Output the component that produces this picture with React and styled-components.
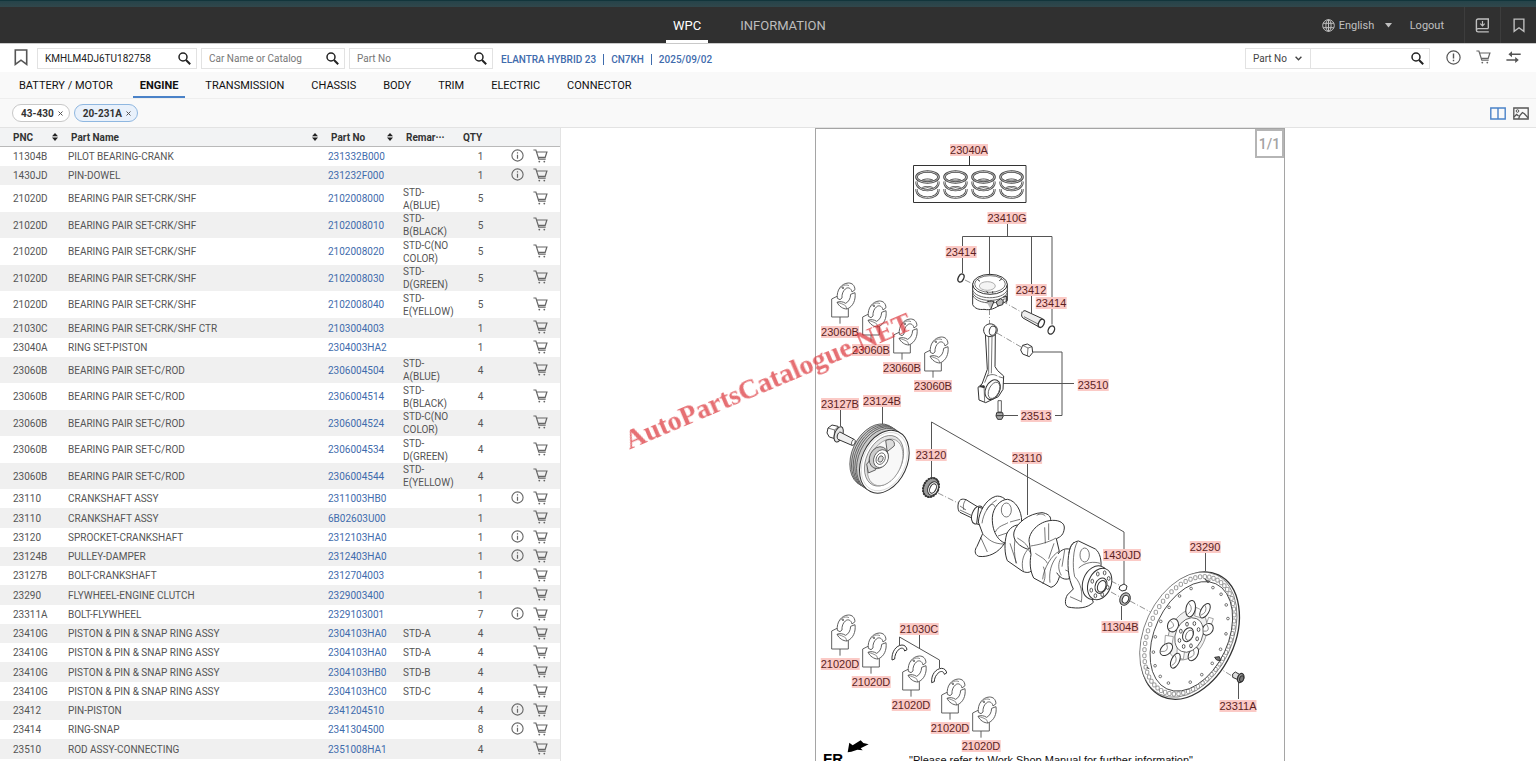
import React, { useState } from 'react'
import styled, { createGlobalStyle } from 'styled-components'

const GlobalStyle = createGlobalStyle`
  * { box-sizing: border-box; }
  body {
    margin: 0;
    background: #fff;
    color: #222;
    font-family: Roboto, "Liberation Sans", sans-serif;
    font-size: 10px;
  }
  button, input, select {
    font: inherit;
    color: inherit;
    background: none;
    border: 0;
    padding: 0;
    margin: 0;
  }
  button { cursor: pointer; }
  svg { display: block; flex: none; }
`

const Page = styled.div`
  height: 100vh;
  display: flex;
  flex-direction: column;
  overflow: hidden;
`

const TopStrip = styled.div`
  height: 7px;
  flex: none;
  border-top: 1px solid #12353b;
  background: linear-gradient(#25444a, #31474b);
`

const Header = styled.header`
  height: 37px;
  flex: none;
  display: flex;
  align-items: stretch;
  background: #303030;
  border-bottom: 1px solid #c9c9c9;
  color: #c0c0c0;
`

const MainNav = styled.nav`
  display: flex;
  gap: 25px;
  margin-left: calc(50% - 102px);
`

const NavLink = styled.a`
  display: flex;
  align-items: center;
  padding: 3px 7px 0;
  font-size: 13px;
  text-decoration: none;
  color: ${(p) => (p.$active ? '#fff' : '#bdbdbd')};
  border-bottom: 3px solid ${(p) => (p.$active ? '#fff' : 'transparent')};
`

const HeaderTools = styled.div`
  display: flex;
  align-items: stretch;
  margin-left: auto;
  font-size: 11px;
`

const Language = styled.label`
  display: flex;
  align-items: center;
  gap: 4px;
  margin-right: 18px;

  select {
    appearance: none;
    width: 42px;
  }
`

const LogoutButton = styled.button`
  margin-right: 20px;
`

const HeaderIcon = styled.button`
  width: 36px;
  display: flex;
  align-items: center;
  justify-content: center;
  border-left: 1px solid #3d3d3d;
`

const SearchBar = styled.div`
  height: 28px;
  flex: none;
  display: flex;
  align-items: center;
  padding: 0 14px;
`

const IconButton = styled.button`
  display: flex;
  align-items: center;
  justify-content: center;
  color: #555;
  padding-bottom: ${(p) => (p.$raised ? 2 : 0)}px;
`

const Fields = styled.div`
  display: flex;
  gap: 4px;
  margin-left: 9px;
`

const Field = styled.form`
  width: ${(p) => p.$width}px;
  height: 21px;
  display: flex;
  align-items: center;
  border: 1px solid #e2e2e2;
  padding: 0 5px 0 7px;

  input {
    flex: 1;
    min-width: 0;
    outline: 0;
    padding-top: 1px;
  }
  input::placeholder { color: #777; opacity: 1; }
`

const Vehicle = styled.div`
  display: flex;
  margin-left: 8px;
  padding-top: 2px;
  color: #3f6cad;
  font-weight: 500;

  span + span {
    margin-left: 7px;
    padding-left: 7px;
    border-left: 1px solid #3f6cad;
  }
`

const PartSearch = styled.form`
  width: 185px;
  height: 21px;
  display: flex;
  align-items: center;
  margin-left: auto;
  border: 1px solid #e2e2e2;
  padding-right: 5px;

  input { flex: 1; min-width: 0; outline: 0; }
`

const PartSelect = styled.label`
  height: 100%;
  width: 65px;
  display: flex;
  align-items: center;
  padding-left: 7px;
  border-right: 1px solid #e2e2e2;

  select {
    appearance: none;
    width: 42px;
    color: #444;
  }
`

const BarTools = styled.div`
  display: flex;
  gap: 15px;
  margin: 0 1px 0 16px;
`

const Tabs = styled.nav`
  height: 27px;
  flex: none;
  display: flex;
  gap: 13px;
  padding-left: 12px;
  background: #f9f9f9;
  border-bottom: 1px solid #eee;
`

const Tab = styled.a`
  display: flex;
  align-items: center;
  padding: 3px 7px 0;
  font-size: 11px;
  text-decoration: none;
  color: #111;
  font-weight: ${(p) => (p.$active ? 700 : 400)};
  border-bottom: 2px solid ${(p) => (p.$active ? '#4a82c8' : 'transparent')};
`

const Chips = styled.div`
  height: 29px;
  flex: none;
  display: flex;
  align-items: center;
  gap: 4px;
  padding: 0 7px 0 12px;
  background: #f9f9f9;
  border-bottom: 1px solid #e3e3e3;
`

const Chip = styled.button`
  height: 18px;
  display: flex;
  align-items: center;
  gap: 4px;
  padding: 0 6px 0 8px;
  font-weight: 700;
  color: #333;
  border: 1px solid ${(p) => (p.$active ? '#8fb7e0' : '#c8c8c8')};
  border-radius: 9px;
  background: ${(p) => (p.$active ? '#e9f1fb' : '#fff')};
`

const ViewSwitch = styled.div`
  display: flex;
  gap: 7px;
  margin-left: auto;
`

const Workspace = styled.main`
  flex: 1;
  min-height: 0;
  display: grid;
  grid-template-columns: minmax(561px, 36%) 1fr;
`

const ListPane = styled.section`
  min-height: 0;
  overflow-y: auto;
  scrollbar-width: none;
  border-right: 1px solid #e3e3e3;
`

const PartsTable = styled.table`
  width: 100%;
  table-layout: fixed;
  border-spacing: 0;
  line-height: 13px;
  color: #555;
`

const Th = styled.th`
  height: 19px;
  padding: 0 4px 0 ${(p) => p.$pad || 9}px;
  text-align: left;
  font-weight: 700;
  color: #333;
  background: #f2f3f4;
  border-bottom: 1px solid #b9b9b9;

  div {
    display: flex;
    align-items: center;
    justify-content: space-between;
  }
`

const Row = styled.tr`
  height: ${(p) => (p.$tall ? 27 : 19)}px;

  &:nth-child(even) {
    background: #f0f0f0;
    ${(p) => p.$tall && 'height: 26px;'}
  }
  &:nth-child(4n) {
    ${(p) => !p.$tall && 'height: 20px;'}
  }
`

const Td = styled.td`
  padding: 0 0 0 ${(p) => p.$pad || 6}px;
  text-align: ${(p) => p.$align || 'left'};
`

const PartLink = styled.a`
  color: #3f6cad;
  text-decoration: none;
`

const Actions = styled.div`
  display: flex;
  justify-content: flex-end;
  gap: 9px;
  padding: 0 12px 2px 0;
`

const DrawingPane = styled.section`
  min-height: 0;
  overflow: hidden;
  display: flex;
  justify-content: center;
  padding-left: 3px;
`

const Sheet = styled.div`
  position: relative;
  width: 470px;
  height: 664px;
  flex: none;
  border: 1px solid #a5a5a5;
`

const PageCount = styled.div`
  position: absolute;
  top: 0;
  right: 0;
  width: 29px;
  height: 29px;
  display: flex;
  align-items: center;
  justify-content: center;
  border: 2px solid #b5b5b5;
  font-size: 14px;
  font-weight: 500;
  color: #a3a3a3;
`

const Hotspot = styled.button`
  position: absolute;
  transform: translate(-50%, -50%);
  height: 12px;
  line-height: 12px;
  font-family: "Liberation Sans", Arial, sans-serif;
  font-size: 11px;
  color: #5c1f1f;
  background: #fbcac6;
`

const Watermark = styled.div`
  position: fixed;
  left: 50%;
  top: 50%;
  transform: translate(-50%, -50%) rotate(-23deg);
  pointer-events: none;
  font-family: "Liberation Serif", "Times New Roman", serif;
  font-size: 28px;
  font-weight: 700;
  white-space: nowrap;
  color: rgba(220, 50, 56, 0.7);
`

const SearchIcon = () => (
  <svg width="13" height="13" viewBox="0 0 13 13" fill="none" stroke="#222">
    <circle cx="5" cy="5" r="4" strokeWidth="1.5" />
    <path d="M8 8l4.2 4.2" strokeWidth="2" />
  </svg>
)

const BookmarkIcon = ({ width = 14, height = 17 }) => (
  <svg width={width} height={height} viewBox="0 0 14 17" fill="none" stroke="currentColor" strokeWidth="1.6">
    <path d="M1.3 1h11.4v14.4L7 11.2l-5.7 4.2z" />
  </svg>
)

const GlobeIcon = () => (
  <svg width="13" height="13" viewBox="0 0 13 13" fill="none" stroke="currentColor">
    <circle cx="6.5" cy="6.5" r="5.8" />
    <ellipse cx="6.5" cy="6.5" rx="2.6" ry="5.8" />
    <path d="M1.2 4.3h10.6M1.2 8.7h10.6M6.5 .7v11.6" />
  </svg>
)

const ManualIcon = () => (
  <svg width="15" height="15" viewBox="0 0 15 15" fill="none" stroke="currentColor" strokeWidth="1.4">
    <path d="M13.3 10.6V1H3.2C2 1 1.4 1.7 1.4 2.8v9.4c0 1 .6 1.7 1.8 1.7h10.6M1.4 12.2c0-1 .6-1.6 1.8-1.6h10.1" />
    <path d="M7.5 3v4.6M5.3 5.6l2.2 2.2 2.2-2.2" strokeWidth="1.2" />
  </svg>
)

const CartIcon = () => (
  <svg width="15" height="14" viewBox="0 0 15 14" fill="none" stroke="#666" strokeWidth="1.2">
    <path d="M.4 1h2.5l2.900 9.200h6.900M3.500 3h10.400l-1.700 5.300H5.200" />
    <circle cx="6.3" cy="12.6" r=".9" fill="#666" stroke="none" />
    <circle cx="11.3" cy="12.6" r=".9" fill="#666" stroke="none" />
  </svg>
)

const InfoIcon = () => (
  <svg width="13" height="13" viewBox="0 0 13 13" fill="none" stroke="#666">
    <circle cx="6.5" cy="6.5" r="5.6" strokeWidth="1.1" />
    <path d="M6.5 5.7v4M6.5 3.3v1.3" strokeWidth="1.2" />
  </svg>
)

const AlertIcon = () => (
  <svg width="15" height="15" viewBox="0 0 15 15" fill="none" stroke="#555">
    <circle cx="7.5" cy="7.5" r="6.6" strokeWidth="1.2" />
    <path d="M7.5 3.6v4.9M7.5 9.8v1.5" strokeWidth="1.4" />
  </svg>
)

const CompareIcon = () => (
  <svg width="15" height="14" viewBox="0 0 15 14" fill="#555">
    <path d="M6 3.500h8.700v1.600H6v2.200L2.400 4.300 6 1.300zM9.200 9.200V7l3.600 3-3.600 3v-2.200H.4V9.200z" />
  </svg>
)

const SplitIcon = () => (
  <svg width="16" height="13" viewBox="0 0 16 13" fill="none" stroke="#4a82c8" strokeWidth="1.4">
    <path d="M.8 1h14.4v11H.8zM8 1v11" />
  </svg>
)

const ImageIcon = () => (
  <svg width="16" height="13" viewBox="0 0 16 13" fill="none" stroke="#555" strokeWidth="1.3">
    <path d="M.8 1h14.4v11H.8z" />
    <circle cx="4.5" cy="4" r="1.3" strokeWidth="1" />
    <path d="M1 10l2.6-2.6 2 1.6M5.6 11.8l1.2-3.3 2.6-3 2 1.3 3.6 4" />
  </svg>
)

const SortIcon = () => (
  <svg width="6" height="8" viewBox="0 0 6 8" fill="#222">
    <path d="M0 3.2L3 0l3 3.2zM0 4.6L3 8l3-3.4z" />
  </svg>
)

const CloseIcon = () => (
  <svg width="5" height="5" viewBox="0 0 5 5" stroke="#555">
    <path d="M.5.5l4 4M4.5.5l-4 4" />
  </svg>
)

const tabs = ['BATTERY / MOTOR', 'ENGINE', 'TRANSMISSION', 'CHASSIS', 'BODY', 'TRIM', 'ELECTRIC', 'CONNECTOR']

// pnc, name, part no, remark, qty, has info
const parts = [
  ['11304B', 'PILOT BEARING-CRANK', '231332B000', '', 1, true],
  ['1430JD', 'PIN-DOWEL', '231232F000', '', 1, true],
  ['21020D', 'BEARING PAIR SET-CRK/SHF', '2102008000', 'STD-A(BLUE)', 5],
  ['21020D', 'BEARING PAIR SET-CRK/SHF', '2102008010', 'STD-B(BLACK)', 5],
  ['21020D', 'BEARING PAIR SET-CRK/SHF', '2102008020', 'STD-C(NO COLOR)', 5],
  ['21020D', 'BEARING PAIR SET-CRK/SHF', '2102008030', 'STD-D(GREEN)', 5],
  ['21020D', 'BEARING PAIR SET-CRK/SHF', '2102008040', 'STD-E(YELLOW)', 5],
  ['21030C', 'BEARING PAIR SET-CRK/SHF CTR', '2103004003', '', 1],
  ['23040A', 'RING SET-PISTON', '2304003HA2', '', 1],
  ['23060B', 'BEARING PAIR SET-C/ROD', '2306004504', 'STD-A(BLUE)', 4],
  ['23060B', 'BEARING PAIR SET-C/ROD', '2306004514', 'STD-B(BLACK)', 4],
  ['23060B', 'BEARING PAIR SET-C/ROD', '2306004524', 'STD-C(NO COLOR)', 4],
  ['23060B', 'BEARING PAIR SET-C/ROD', '2306004534', 'STD-D(GREEN)', 4],
  ['23060B', 'BEARING PAIR SET-C/ROD', '2306004544', 'STD-E(YELLOW)', 4],
  ['23110', 'CRANKSHAFT ASSY', '2311003HB0', '', 1, true],
  ['23110', 'CRANKSHAFT ASSY', '6B02603U00', '', 1],
  ['23120', 'SPROCKET-CRANKSHAFT', '2312103HA0', '', 1, true],
  ['23124B', 'PULLEY-DAMPER', '2312403HA0', '', 1, true],
  ['23127B', 'BOLT-CRANKSHAFT', '2312704003', '', 1],
  ['23290', 'FLYWHEEL-ENGINE CLUTCH', '2329003400', '', 1],
  ['23311A', 'BOLT-FLYWHEEL', '2329103001', '', 7, true],
  ['23410G', 'PISTON & PIN & SNAP RING ASSY', '2304103HA0', 'STD-A', 4],
  ['23410G', 'PISTON & PIN & SNAP RING ASSY', '2304103HA0', 'STD-A', 4],
  ['23410G', 'PISTON & PIN & SNAP RING ASSY', '2304103HB0', 'STD-B', 4],
  ['23410G', 'PISTON & PIN & SNAP RING ASSY', '2304103HC0', 'STD-C', 4],
  ['23412', 'PIN-PISTON', '2341204510', '', 4, true],
  ['23414', 'RING-SNAP', '2341304500', '', 8, true],
  ['23510', 'ROD ASSY-CONNECTING', '2351008HA1', '', 4],
]

// sheet origin of the drawing coordinates
const OX = 816
const OY = 129

const hotspots = [
  ['23040A', 969, 150], ['23410G', 1007, 218], ['23414', 961, 252], ['23412', 1031, 290],
  ['23414', 1051, 303], ['23060B', 840, 332], ['23060B', 871, 350], ['23060B', 902, 368],
  ['23060B', 933, 386], ['23124B', 882, 401], ['23127B', 840, 404], ['23510', 1093, 385],
  ['23513', 1036, 416], ['23120', 931, 455], ['23110', 1027, 458], ['1430JD', 1122, 555],
  ['23290', 1205, 547], ['11304B', 1120, 627], ['23311A', 1238, 706], ['21030C', 919, 629],
  ['21020D', 840, 664], ['21020D', 871, 682], ['21020D', 911, 705], ['21020D', 950, 728],
  ['21020D', 981, 746],
]

const T = 1 / 3
const around = (n, cx, cy, rx, ry, tilt) =>
  Array.from({ length: n }, (_, i) => {
    const a = (i / n) * Math.PI * 2
    const t = (tilt * Math.PI) / 180
    const x = rx * Math.cos(a)
    const y = ry * Math.sin(a)
    return [cx + x * Math.cos(t) - y * Math.sin(t), cy + x * Math.sin(t) + y * Math.cos(t)]
  })

const Rings = ({ x }) => (
  <g transform={`translate(${x} 177)`} fill="none">
    {[15, 7.5].map((y) => (
      <g key={y} transform={`translate(0 ${y})`}>
        <path d="M-11-3C-12 8.500 12 8.500 11-3M-5-4Q0-6 5-4" stroke="#444" strokeWidth="2.2" />
        <path d="M-11-3C-12 8.500 12 8.500 11-3M-5-4Q0-6 5-4" stroke="#eee" strokeWidth=".8" />
      </g>
    ))}
    <ellipse rx="11" ry="5.5" stroke="#444" strokeWidth="2.6" />
    <ellipse rx="11" ry="5.5" stroke="#ddd" strokeWidth=".8" />
  </g>
)

const BearingPair = ({ x, y }) => (
  <g transform={`translate(${x} ${y}) scale(${T}) translate(-91 -160)`} stroke="#555" strokeWidth="2.8">
    <path d="M82 80L66 88v54h50v-26M91 142v20" fill="none" />
    <path d="M83 86c-3-24 12-45 33-46 12 0 19 7 20 20l-9 7c-2-12-13-16-20-9-7 6-11 16-10 27l-6 5z" />
    <path d="M92 56c8-10 18-12 26-8" fill="none" strokeWidth="2" />
    <circle cx="100" cy="55" r="2" />
    <path d="M123 74l13-5c3 22-6 42-24 49-12 0-24-8-30-20 8-4 18-2 26 3 9-5 14-13 15-27z" />
    <path d="M82 98c8 2 22 6 27 12l2 8" fill="none" strokeWidth="2" />
  </g>
)

const Crankshaft = () => (
  <g transform={`translate(910 410) scale(${T})`} strokeWidth="3">
    <path d="M152 269c6-3 12-1 16 0l34 21-14 35-38-18c-9-6-8-32 2-38z" />
    <path d="M150 288l18 12M150 300l36 17M168 269c-8 8-10 22-6 31" strokeWidth="2" />
    <ellipse cx="203" cy="315" rx="17" ry="28" transform="rotate(20 203 315)" />
    <path d="M206 291l20 8-6 50-20-8z" />
    <path d="M205 336c2-30 22-68 52-77 14-3 30 6 35 18l-14 60 6 62c-18 30-50 44-78 40-14-6-12-20-5-30l17-38z" />
    <path d="M216 340c4-30 20-56 44-70M218 372c20 18 30 30 66 30M212 382l20 44M230 300c8-18 22-22 24-10" strokeWidth="2" />
    <path d="M247 322c2-30 24-54 46-54 24 4 42 34 42 66-14 14-24 40-40 66-24 2-50-30-48-78z" />
    <ellipse cx="289" cy="300" rx="15" ry="21" strokeWidth="2" />
    <path d="M256 366c10-20 26-20 38-28M264 378l30-10M300 336l30-8" strokeWidth="2" />
    <path d="M290 372c8-18 26-30 38-26l38 24 8 96c-8 24-22 24-36 18l-46-32c-8-20-10-50-2-80z" />
    <path d="M330 350c-16 20-22 60-12 110M352 420c-16 20-18 44-12 64M300 400l20 60M356 420l16 24" strokeWidth="2" />
    <path d="M312 366c8-28 46-56 84-58 16 2 26 10 26 20l-50 76-18 14c-24-8-48-26-42-52z" />
    <path d="M322 384c16 10 30 18 34 34M380 316c10-6 20-4 26 2" strokeWidth="2" />
    <path d="M358 398c-6-22 20-60 60-66 24-4 46 4 45 22-2 20-10 26-24 32l8 34 6 54c-4 30-10 52-30 58l-52-28c-12-24-12-48-8-70z" />
    <path d="M362 408c24-4 52-10 76-24M404 352l2 48M416 340v50M432 400l-16 46M376 430c14 10 30 16 36 30M400 470c8 20 6 40-2 52M448 424c-20 8-48 50-50 84M440 440c-16 20-24 46-20 78" strokeWidth="2" fill="none" />
    <path d="M444 432c10-14 24-18 36-14l-2 88c-14 4-26 0-38-18" />
    <path d="M452 446c-8 14-8 34 2 50M464 420l-8 50M466 480l14 6" strokeWidth="2" />
    <path d="M478 424c2-18 14-30 28-31l50 24c14 10 20 36 16 60l-40 50 18 50c-18 18-46 20-76 14-12-6-8-26-2-36l18-18c-16-30-20-80-12-113z" />
    <path d="M476 430c4-16 8-28 16-34M502 396c-12 20-16 70-8 104M494 500c20 20 24 50 20 74M480 560l36 16M506 474c20-18 46-20 64-14" strokeWidth="2" fill="none" />
    <ellipse cx="524" cy="435" rx="14" ry="21" strokeWidth="2" />
    <ellipse cx="557" cy="518" rx="38" ry="52" transform="rotate(22 557 518)" />
    <ellipse cx="569" cy="522" rx="34" ry="49" transform="rotate(22 569 522)" />
    <ellipse cx="573" cy="527" rx="17" ry="24" transform="rotate(22 573 527)" />
    <ellipse cx="575" cy="529" rx="12" ry="18" transform="rotate(22 575 529)" />
    {around(8, 570, 523, 25, 37, 22).map(([x, y], i) => (
      <ellipse key={i} cx={x} cy={y} rx="4" ry="6" strokeWidth="2.4" />
    ))}
  </g>
)

const Pulley = () => (
  <g transform={`translate(810 270) scale(${T})`} strokeWidth="3">
    {[[194, 556], [199, 559], [204, 562], [209, 565], [214, 569]].map(([x, y]) => (
      <ellipse key={x} cx={x} cy={y} rx="68" ry="99" transform={`rotate(25 ${x} ${y})`} fill="#c9c9c9" stroke="#555" strokeWidth="2.4" />
    ))}
    <g transform="rotate(25 223 575)">
      <ellipse cx="223" cy="575" rx="68" ry="99" />
      <ellipse cx="223" cy="575" rx="63" ry="92" strokeWidth="1" stroke="#999" />
      <ellipse cx="221" cy="573" rx="53" ry="80" fill="#e4e4e4" strokeWidth="2" stroke="#666" />
      <ellipse cx="226" cy="576" rx="48" ry="74" fill="#f8f8f8" strokeWidth="2" stroke="#888" />
      <path d="M200 516c12-16 28-10 30 4l-12 24zM186 580l-8 24 16 22 16-18z" fill="#dcdcdc" strokeWidth="2" />
    </g>
    <ellipse cx="206" cy="563" rx="27" ry="34" transform="rotate(25 206 563)" fill="#ccc" strokeWidth="2" />
    <ellipse cx="213" cy="566" rx="21" ry="28" transform="rotate(25 213 566)" strokeWidth="2" />
    <ellipse cx="212" cy="566" rx="13" ry="18" transform="rotate(25 212 566)" strokeWidth="2" />
    <ellipse cx="212" cy="567" rx="7" ry="10" transform="rotate(25 212 567)" fill="#ddd" strokeWidth="2" />
    <path d="M54 474l12-9 18 4 6 24-12 14-20-6-7-12z" />
    <path d="M54 474l20 6 10-10M74 480l-2 24" strokeWidth="2" fill="none" />
    <ellipse cx="86" cy="493" rx="12" ry="24" transform="rotate(20 86 493)" fill="#e4e4e4" />
    <path d="M90 486l42 22c6 6 2 18-6 18l-42-18c-6-8 0-20 6-22z" fill="#f0f0f0" />
    <ellipse cx="130" cy="517" rx="5" ry="9" transform="rotate(20 130 517)" strokeWidth="2" />
  </g>
)

const petals = [
  [302, 236, 14, 25, 12], [345, 242, 12, 24, 30], [249, 286, 16, 20, 20], [353, 298, 15, 19, 40],
  [229, 358, 15, 22, 45], [310, 372, 13, 22, 30], [256, 392, 12, 24, 25],
]

const Flywheel = () => (
  <g transform={`translate(1090 530) scale(${T})`} strokeWidth="3">
    <ellipse cx="300" cy="317" rx="134" ry="201" transform="rotate(25 300 317)" strokeWidth="4" />
    <ellipse cx="295" cy="314" rx="132" ry="198" transform="rotate(25 295 314)" strokeWidth="1.6" />
    {around(58, 298, 316, 121, 186, 25).map(([x, y], i) => (
      <rect key={i} x={x - 5} y={y - 6} width="10" height="12" rx="3" stroke="#555" strokeWidth="1.8" />
    ))}
    <ellipse cx="304" cy="319" rx="110" ry="174" transform="rotate(25 304 319)" strokeWidth="2.4" />
    {around(20, 302, 316, 99, 158, 25).map(([x, y], i) => (
      i % 10 === 4 ? null : <circle key={i} cx={x} cy={y} r="4" strokeWidth="2" />
    ))}
    <path d="M344 146l10 12 6-6M170 412l8 4M374 382l14-2 4 12-12-2z" fill="#777" strokeWidth="3" />
    <ellipse cx="292" cy="314" rx="54" ry="80" transform="rotate(25 292 314)" fill="#f1f1f1" stroke="#777" strokeWidth="2" />
    <path d="M318 232l24 12-6 20-22-6zM356 262l14 4-8 24-14-4zM226 316l24 4-4 24-22 2zM262 350l22 12-4 26-20-6z" stroke="#777" strokeWidth="2" />
    {petals.map(([x, y, rx, ry, r]) => (
      <g key={x} transform={`rotate(${r} ${x} ${y})`}>
        <ellipse cx={x} cy={y} rx={rx} ry={ry} />
        <path d={`M${x - rx + 5} ${y - ry + 10}Q${x + rx - 2} ${y} ${x - rx + 8} ${y + ry - 6}`} stroke="#666" strokeWidth="2" fill="none" />
      </g>
    ))}
    <ellipse cx="297" cy="315" rx="40" ry="54" transform="rotate(25 297 315)" strokeWidth="2" />
    <ellipse cx="294" cy="314" rx="15" ry="22" transform="rotate(25 294 314)" />
    <ellipse cx="298" cy="316" rx="10" ry="16" transform="rotate(25 298 316)" strokeWidth="2" />
    {around(8, 297, 315, 27, 38, 25).map(([x, y], i) => (
      <ellipse key={i} cx={x} cy={y} rx="4" ry="6" strokeWidth="2.4" />
    ))}
    <path d="M428 432l8-6 14 8-4 16-18-8z" fill="#ddd" />
    <ellipse cx="452" cy="444" rx="9" ry="14" transform="rotate(20 452 444)" fill="#999" strokeWidth="4" />
    <ellipse cx="455" cy="446" rx="6" ry="9" transform="rotate(20 455 446)" fill="#777" />
  </g>
)

const PistonAndRod = () => (
  <g transform={`translate(890 130) scale(${T})`} strokeWidth="3">
    <ellipse cx="213" cy="444" rx="8" ry="13" transform="rotate(25 213 444)" strokeWidth="4" />
    <ellipse cx="484" cy="600" rx="9" ry="13" transform="rotate(25 484 600)" strokeWidth="4" />
    <path d="M248 462v62c6 12 20 16 34 14 20 4 34-4 46-12l24-14v-50z" />
    <path d="M248 480c10 30 90 32 104 0M248 488c10 30 90 32 104 0M249 497c12 28 88 30 103 0" fill="none" stroke="#666" strokeWidth="3" />
    <path d="M290 516c10-4 20-2 22-2l-10 24M318 516l14-10 8 6-2 12-14 4zM338 502l12-4v20" fill="#bbb" />
    <ellipse cx="300" cy="463" rx="52" ry="30" />
    <ellipse cx="300" cy="462" rx="46" ry="25" strokeWidth="2" />
    <ellipse cx="292" cy="468" rx="24" ry="13" stroke="#888" strokeWidth="2" fill="#f4f4f4" />
    <path d="M262 448l8 6M336 446l-8 6M290 484l4 6M308 484v6" strokeWidth="3" />
    <path d="M405 542l52 24-8 26-50-28c-8-6-4-22 6-22z" fill="#eee" />
    <path d="M402 560l46 24" stroke="#777" />
    <ellipse cx="454" cy="580" rx="8" ry="13" transform="rotate(25 454 580)" strokeWidth="4" />
    <path d="M286 610l6 108-16 44-12 10 3 38 20 8 38-18 14-22 2-40-18-16-8-12 1-100z" />
    <path d="M296 618v110l-12 30M306 620l-2 110M290 740c10-8 22-8 32-2M266 772l16-6M282 766l2 50M326 740l14 4" strokeWidth="2" fill="none" />
    <ellipse cx="308" cy="779" rx="21" ry="31" transform="rotate(25 308 779)" />
    <ellipse cx="312" cy="781" rx="15" ry="26" transform="rotate(25 312 781)" strokeWidth="2" />
    <path d="M284 590c10-14 34-10 38 8 0 14-10 22-22 22-16 0-24-18-16-30z" />
    <ellipse cx="308" cy="602" rx="10" ry="14" strokeWidth="3" transform="rotate(15 308 602)" />
    <path d="M270 768l14 4" strokeWidth="6" />
    <path d="M398 646l14-4 14 8 2 18-10 12-20-8-6-12z" />
    <path d="M398 646l16 8 12-4M414 654l-2 24" strokeWidth="2" fill="none" />
    <path d="M324 812v34h10v-34z" strokeWidth="2.4" />
    <path d="M320 848h18l2 10-5 10h-12l-5-10z" fill="#aaa" />
    <path d="M319 857h20" />
  </g>
)

const Drawing = () => (
  <svg width="468" height="662" viewBox={`${OX} ${OY} 468 662`} fill="#fff" stroke="#333">
    <g fill="none" stroke="#555" strokeWidth="1">
      <path d="M913.5 165.5h112.5v37h-112.5zM969.5 156v9" stroke="#333" />
      <path d="M1007.5 224v12.5M962.5 273v-36.5h89.5v88M989.5 236.5v38M1031.5 236.5v77" />
      <path d="M1033 352h29v63.5h-7M1003 383.5h71M1004 415.5h14" />
      <path d="M840.5 410v16M882.5 407v17M931.5 477v-55l192.500 110v54M1205.5 553v18M1121.5 620v-14M1238.5 699v-17" />
      <path d="M919.5 635v13M899.5 645v-8l40 23v8" />
    </g>
    <g fill="none" stroke="#777" strokeWidth=".8" strokeDasharray="6 2 1 2">
      <path d="M965 280l10 5M1002 301l21 12M989.5 309v15M997 333l24 14M938 493l22 11M1111 581l10 5M1111 592l9 5M1130 601l28 15M1198 655l34 21" />
    </g>
    <Rings x={927.5} />
    <Rings x={955.5} />
    <Rings x={983.5} />
    <Rings x={1011.5} />
    <PistonAndRod />
    {hotspots.filter(([code]) => code === '23060B' || code === '21020D').map(([code, x, y]) => (
      <BearingPair key={code + x} x={x} y={y - 9} />
    ))}
    <Pulley />
    <g strokeWidth="1">
      <ellipse cx="931" cy="487.5" rx="7.5" ry="10" transform="rotate(25 931 487.5)" fill="#999" />
      <ellipse cx="931" cy="487.5" rx="7.5" ry="10" transform="rotate(25 931 487.5)" strokeWidth="2" strokeDasharray="1.8 1" fill="none" />
      <ellipse cx="933" cy="488.5" rx="5" ry="7" transform="rotate(25 933 488.5)" />
      <ellipse cx="933" cy="488.5" rx="3" ry="5" transform="rotate(25 933 488.5)" />
    </g>
    <Crankshaft />
    <path d="M1027.5 464v51" stroke="#555" />
    <path d="M1120 586l4-2 3 2-1 4-4 1-3-2z" />
    <ellipse cx="1125" cy="599" rx="5" ry="6.5" transform="rotate(25 1125 599)" fill="#bbb" />
    <ellipse cx="1125.5" cy="599" rx="3" ry="4" transform="rotate(25 1125 599)" />
    <Flywheel />
    <g transform={`translate(810 600) scale(${T})`} strokeWidth="3">
      <path d="M246 180c-2-24 12-44 30-45 8 0 14 6 15 14l-7 4c-2-10-10-10-16-6-10 8-14 20-14 30z" />
      <path d="M365 248c-2-24 12-42 30-43 8 0 14 6 15 14l-7 4c-2-10-10-10-16-6-10 8-14 18-14 28z" />
      <path d="M113 457l5-29 10 8 24-15 8 8 16 4-24 12 6 6-16-2-18 6z" fill="#000" stroke="none" />
    </g>
    <text x="823" y="764" fill="#000" stroke="none" fontFamily="Liberation Sans, Arial, sans-serif" fontSize="15" fontWeight="700">FR</text>
    <text x="909" y="764" fill="#111" stroke="none" fontFamily="Liberation Sans, Arial, sans-serif" fontSize="11">"Please refer to Work Shop Manual for further information"</text>
  </svg>
)

const SearchField = ({ label, width, value }) => (
  <Field $width={width} onSubmit={(e) => e.preventDefault()}>
    <input aria-label={label} placeholder={label} defaultValue={value} />
    <IconButton aria-label="Search"><SearchIcon /></IconButton>
  </Field>
)

const App = () => {
  const [tab, setTab] = useState('ENGINE')

  return (
    <Page>
      <GlobalStyle />
      <TopStrip />
      <Header>
        <MainNav>
          <NavLink href="#wpc" $active>WPC</NavLink>
          <NavLink href="#information">INFORMATION</NavLink>
        </MainNav>
        <HeaderTools>
          <Language>
            <GlobeIcon />
            <select aria-label="Language"><option>English</option></select>
            <svg width="7" height="5" viewBox="0 0 7 5" fill="currentColor"><path d="M0 0h7L3.5 4.5z" /></svg>
          </Language>
          <LogoutButton>Logout</LogoutButton>
          <HeaderIcon aria-label="Manual"><ManualIcon /></HeaderIcon>
          <HeaderIcon aria-label="Bookmarks"><BookmarkIcon width={12} height={15} /></HeaderIcon>
        </HeaderTools>
      </Header>

      <SearchBar>
        <IconButton $raised aria-label="Bookmark"><BookmarkIcon /></IconButton>
        <Fields>
          <SearchField label="VIN" width={160} value="KMHLM4DJ6TU182758" />
          <SearchField label="Car Name or Catalog" width={144} />
          <SearchField label="Part No" width={144} />
        </Fields>
        <Vehicle>
          <span>ELANTRA HYBRID 23</span>
          <span>CN7KH</span>
          <span>2025/09/02</span>
        </Vehicle>
        <PartSearch onSubmit={(e) => e.preventDefault()}>
          <PartSelect>
            <select aria-label="Search by"><option>Part No</option></select>
            <svg width="7" height="5" viewBox="0 0 7 5" fill="none" stroke="#444" strokeWidth="1.4"><path d="M.6.8l2.9 2.9L6.4.8" /></svg>
          </PartSelect>
          <input aria-label="Part search" />
          <IconButton aria-label="Search"><SearchIcon /></IconButton>
        </PartSearch>
        <BarTools>
          <IconButton $raised aria-label="Notice"><AlertIcon /></IconButton>
          <IconButton $raised aria-label="Cart"><CartIcon /></IconButton>
          <IconButton $raised aria-label="Compare"><CompareIcon /></IconButton>
        </BarTools>
      </SearchBar>

      <Tabs>
        {tabs.map((t) => (
          <Tab key={t} href="#" $active={t === tab} onClick={() => setTab(t)}>{t}</Tab>
        ))}
      </Tabs>

      <Chips>
        <Chip>43-430 <CloseIcon /></Chip>
        <Chip $active>20-231A <CloseIcon /></Chip>
        <ViewSwitch>
          <IconButton aria-label="Split view"><SplitIcon /></IconButton>
          <IconButton aria-label="Image view"><ImageIcon /></IconButton>
        </ViewSwitch>
      </Chips>

      <Workspace>
        <ListPane>
          <PartsTable>
            <colgroup>
              <col width="62" />
              <col />
              <col width="75" />
              <col width="59" />
              <col width="48" />
              <col width="56" />
            </colgroup>
            <thead>
              <tr>
                <Th $pad={13}><div>PNC <SortIcon /></div></Th>
                <Th><div>Part Name <SortIcon /></div></Th>
                <Th><div>Part No <SortIcon /></div></Th>
                <Th>Remar···</Th>
                <Th $pad={7}>QTY</Th>
                <Th aria-label="Actions" />
              </tr>
            </thead>
            <tbody>
              {parts.map(([pnc, name, no, remark, qty, info], i) => (
                <Row key={i} $tall={remark.length > 5}>
                  <Td $pad={13}>{pnc}</Td>
                  <Td>{name}</Td>
                  <Td><PartLink href={`#${no}`}>{no}</PartLink></Td>
                  <Td>{remark}</Td>
                  <Td $pad={1} $align="center">{qty}</Td>
                  <Td>
                    <Actions>
                      {info && <IconButton aria-label="Info"><InfoIcon /></IconButton>}
                      <IconButton aria-label="Add to cart"><CartIcon /></IconButton>
                    </Actions>
                  </Td>
                </Row>
              ))}
            </tbody>
          </PartsTable>
        </ListPane>

        <DrawingPane>
          <Sheet>
            <Drawing />
            {hotspots.map(([code, x, y]) => (
              <Hotspot key={code + x} style={{ left: x - OX, top: y - OY }}>{code}</Hotspot>
            ))}
            <PageCount>1/1</PageCount>
          </Sheet>
        </DrawingPane>
      </Workspace>
      <Watermark>AutoPartsCatalogue.NET</Watermark>
    </Page>
  )
}

export default App
